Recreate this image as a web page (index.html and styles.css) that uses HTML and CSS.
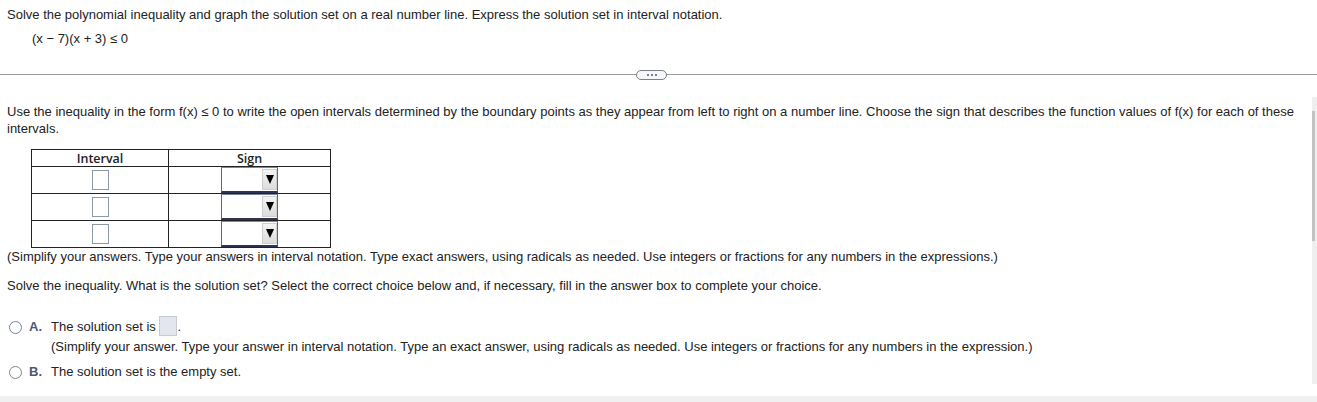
FILE: index.html
```html
<!DOCTYPE html>
<html>
<head>
<meta charset="utf-8">
<link rel="stylesheet" href="styles.css">
</head>
<body>
<div class="page">
  <section class="stem">
    <p class="stem-text">Solve the polynomial inequality and graph the solution set on a real number line. Express the solution set in interval notation.</p>
    <p class="expr">(x − 7)(x + 3) ≤ 0</p>
  </section>
  <div class="divider">
    <button class="pill" type="button"><span></span><span></span><span></span></button>
  </div>
  <div class="pane">
    <div class="content">
      <p class="para">Use the inequality in the form f(x) ≤ 0 to write the open intervals determined by the boundary points as they appear from left to right on a number line. Choose the sign that describes the function values of f(x) for each of these intervals.</p>
      <table class="grid">
        <thead>
          <tr><th class="c1">Interval</th><th class="c2">Sign</th></tr>
        </thead>
        <tbody>
          <tr><td><span class="box"></span></td><td><span class="select"><span class="arrow"><i></i></span></span></td></tr>
          <tr><td><span class="box"></span></td><td><span class="select"><span class="arrow"><i></i></span></span></td></tr>
          <tr><td><span class="box"></span></td><td><span class="select"><span class="arrow"><i></i></span></span></td></tr>
        </tbody>
      </table>
      <p class="note">(Simplify your answers. Type your answers in interval notation. Type exact answers, using radicals as needed. Use integers or fractions for any numbers in the expressions.)</p>
      <p class="ask">Solve the inequality. What is the solution set? Select the correct choice below and, if necessary, fill in the answer box to complete your choice.</p>
      <div class="choices">
        <div class="choice">
          <span class="radio"></span><span class="letter">A.</span>
          <div class="ctext">
            <div>The solution set is <span class="ansbox"></span>.</div>
            <div class="sub">(Simplify your answer. Type your answer in interval notation. Type an exact answer, using radicals as needed. Use integers or fractions for any numbers in the expression.)</div>
          </div>
        </div>
        <div class="choice">
          <span class="radio"></span><span class="letter">B.</span>
          <div class="ctext"><div>The solution set is the empty set.</div></div>
        </div>
      </div>
    </div>
    <div class="scroll"><div class="thumb"></div></div>
  </div>
  <div class="footer"></div>
</div>
</body>
</html>
```
FILE: styles.css
```css
* { box-sizing: border-box; }
html, body { margin: 0; padding: 0; background: #fff; }
body {
  font-family: "Liberation Sans", Arial, sans-serif;
  font-size: 13px;
  color: #222;
  width: 1317px;
  height: 402px;
  overflow: hidden;
}
p { margin: 0; }
.page { display: flex; flex-direction: column; height: 402px; }
.stem { padding: 7px 0 0 7px; height: 74px; }
.stem-text { line-height: 15px; }
.expr { margin: 9px 0 0 25px; line-height: 15px; }
.divider {
  position: relative;
  height: 1px;
  background: #9a9a9a;
}
.pill {
  position: absolute;
  left: 636px;
  top: -4px;
  width: 31px;
  height: 10px;
  border: 1px solid #7a7f88;
  border-radius: 5px;
  background: #f4f6f9;
  padding: 0;
  display: flex;
  align-items: center;
  justify-content: center;
  gap: 2px;
}
.pill span { width: 2px; height: 2px; background: #556; border-radius: 1px; }
.pane { display: flex; flex: 1; padding-top: 22px; }
.content { flex: 1; padding: 6px 0 0 7px; }
.para { width: 1292px; line-height: 17px; }
.grid {
  margin: 12px 0 0 24px;
  border-collapse: collapse;
  border: 1px solid #222;
}
.grid th {
  font-family: "Open Sans", sans-serif;
  font-weight: 600;
  font-size: 12.5px;
  color: #222;
  height: 17px;
  padding: 0;
  line-height: 15px;
  border: 1px solid #222;
}
.grid .c1 { width: 137px; }
.grid .c2 { width: 162px; }
.grid td {
  height: 27px;
  border: 1px solid #222;
  text-align: center;
  vertical-align: middle;
  padding: 0;
}
.box {
  display: inline-block;
  width: 17px;
  height: 20px;
  border: 1px solid #8c9aa8;
  background: #fff;
  vertical-align: middle;
}
.select {
  display: inline-flex;
  justify-content: flex-end;
  width: 57px;
  height: 26px;
  border: 1px solid #5d6680;
  border-top-color: #7d869c;
  border-bottom: 2px solid #2e3350;
  background: #fff;
  vertical-align: middle;
  padding: 1px 0 2px 0;
  margin-top: -1px;
}
.arrow {
  width: 15px;
  height: 21px;
  background: linear-gradient(#f4f4f4, #dcdcdc);
  border: 1px solid #cfcfcf;
  display: flex;
  align-items: center;
  justify-content: center;
}
.arrow i {
  width: 0;
  height: 0;
  border-left: 4.5px solid transparent;
  border-right: 4.5px solid transparent;
  border-top: 9px solid #000;
}
.note { margin-top: 1px; line-height: 15px; }
.ask { margin-top: 14px; line-height: 15px; }
.choices { margin-top: 24px; padding-left: 2px; }
.choice { display: flex; align-items: flex-start; }
.choice + .choice { margin-top: 5px; }
.radio {
  width: 13px;
  height: 13px;
  border: 1px solid #7a8594;
  border-radius: 50%;
  margin-top: 4px;
  flex: none;
}
.letter {
  width: 29px;
  padding-left: 7px;
  font-weight: bold;
  color: #4a5776;
  line-height: 20px;
  flex: none;
}
.ctext { line-height: 20px; }
.ansbox {
  display: inline-block;
  width: 18px;
  height: 20px;
  border: 1px solid #c5ccd8;
  background: #e3e6ee;
  vertical-align: middle;
  margin-top: -3px;
}
.scroll {
  width: 5px;
  margin: 0 0 12px 0;
  background: #efefef;
  padding-top: 14px;
}
.thumb { width: 3px; height: 130px; background: #c2c2c2; }
.footer { height: 6px; background: #f0f0f0; }
```
